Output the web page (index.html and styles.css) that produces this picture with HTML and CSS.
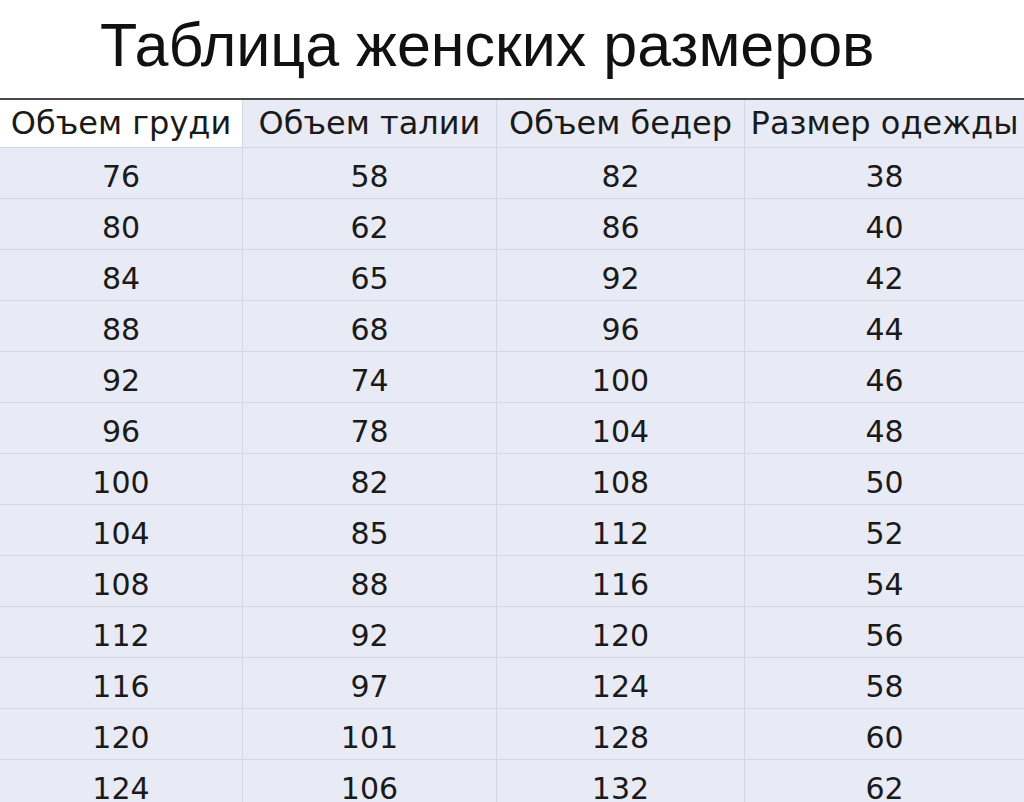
FILE: index.html
```html
<!DOCTYPE html>
<html lang="ru">
<head>
<meta charset="utf-8">
<title>Таблица женских размеров</title>
<link rel="stylesheet" href="styles.css">
</head>
<body>
<h1 class="title">Таблица женских размеров</h1>
<table class="sizes">
<thead>
<tr class="head-row"><th class="first">Объем груди</th><th>Объем талии</th><th>Объем бедер</th><th>Размер одежды</th></tr>
</thead>
<tbody>
<tr><td>76</td><td>58</td><td>82</td><td>38</td></tr>
<tr><td>80</td><td>62</td><td>86</td><td>40</td></tr>
<tr><td>84</td><td>65</td><td>92</td><td>42</td></tr>
<tr><td>88</td><td>68</td><td>96</td><td>44</td></tr>
<tr><td>92</td><td>74</td><td>100</td><td>46</td></tr>
<tr><td>96</td><td>78</td><td>104</td><td>48</td></tr>
<tr><td>100</td><td>82</td><td>108</td><td>50</td></tr>
<tr><td>104</td><td>85</td><td>112</td><td>52</td></tr>
<tr><td>108</td><td>88</td><td>116</td><td>54</td></tr>
<tr><td>112</td><td>92</td><td>120</td><td>56</td></tr>
<tr><td>116</td><td>97</td><td>124</td><td>58</td></tr>
<tr><td>120</td><td>101</td><td>128</td><td>60</td></tr>
<tr><td>124</td><td>106</td><td>132</td><td>62</td></tr>
</tbody>
</table>
</body>
</html>
```

FILE: styles.css
```css
html, body {
  margin: 0;
  padding: 0;
  background: #ffffff;
  overflow: hidden;
}
.title {
  margin: 0;
  height: 98px;
  padding-left: 100px;
  font-family: "Liberation Sans", Arial, sans-serif;
  font-weight: normal;
  font-size: 61px;
  line-height: 90px;
  color: #111111;
}
.sizes {
  width: 1024px;
  border-collapse: collapse;
  table-layout: fixed;
  border-top: 2px solid #4a4a4a;
  font-family: "DejaVu Sans", Verdana, sans-serif;
  color: #1a1a1a;
}
.sizes tr { height: 51px; }
.sizes tr.head-row { height: 48px; }
.sizes th, .sizes td {
  padding: 10px 0 0 0;
  text-align: center;
  vertical-align: top;
  font-weight: normal;
  font-size: 30px;
  line-height: 37px;
  white-space: nowrap;
  background: #e8eaf5;
  border: 1px solid #d3d6e3;
}
.sizes th {
  padding-top: 5px;
  font-size: 32px;
}
.sizes th.first { background: #ffffff; }
.sizes th:nth-child(1) { width: 242px; }
.sizes th:nth-child(2) { width: 253px; }
.sizes th:nth-child(3) { width: 247px; }
.sizes tr > :first-child { border-left: none; }
.sizes tr > :last-child { border-right: none; }
```
